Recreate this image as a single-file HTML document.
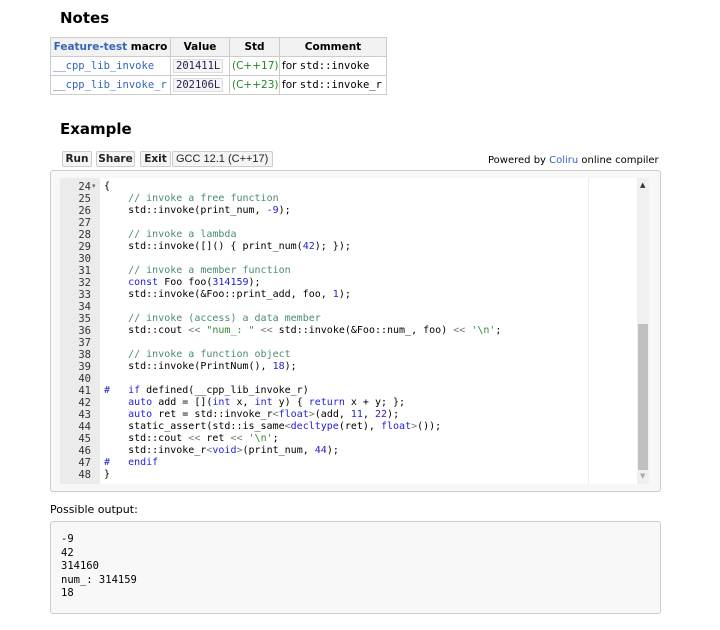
<!DOCTYPE html>
<html><head><meta charset="utf-8"><style>
body{margin:0;width:720px;height:630px;background:#fff;font-family:"DejaVu Sans","Liberation Sans",sans-serif;color:#000;position:relative;overflow:hidden}
.a{position:absolute}
h2{position:absolute;margin:0;font-size:15px;font-weight:bold;left:60px}
table{position:absolute;left:50px;top:37px;border-collapse:collapse;font-size:10.5px;table-layout:fixed;width:336px}
td,th{border:1px solid #ccc;padding:0 2px;height:18px;white-space:nowrap;overflow:hidden}
th{background:#f2f2f2;font-weight:bold}
tr td{background:#fff}
.m{font-family:"DejaVu Sans Mono",monospace;font-size:10.5px}
.l{color:#3366bb}
.v{background:#f5f5f5;border:1px solid #ddd;padding:0 2px;color:#225}
.g{color:#228822}
.btn{position:absolute;top:151px;height:14px;border:1px solid #ccc;background:#f4f4f4;font-size:10.5px;font-weight:bold;line-height:14px;text-align:center;border-radius:2px;color:#222;white-space:nowrap;overflow:hidden}
pre{margin:0;font-family:"DejaVu Sans Mono",monospace;font-size:10px;line-height:12px}
.c{color:#4a8a7a}.k{color:#2222dd}.n{color:#2222cc}.s{color:#338833}.o{color:#777}
</style></head><body>
<h2 style="top:9px">Notes</h2>
<table>
<colgroup><col style="width:120px"><col style="width:59px"><col style="width:50px"><col style="width:107px"></colgroup>
<tr><th><span class="l">Feature-test</span> macro</th><th>Value</th><th>Std</th><th>Comment</th></tr>
<tr><td class="m l">__cpp_lib_invoke</td><td><span class="v m">201411L</span></td><td class="g">(C++17)</td><td>for <span class="m">std::invoke</span></td></tr>
<tr><td class="m l">__cpp_lib_invoke_r</td><td><span class="v m">202106L</span></td><td class="g">(C++23)</td><td>for <span class="m">std::invoke_r</span></td></tr>
</table>
<h2 style="top:120px">Example</h2>
<div class="btn" style="left:62px;width:28px">Run</div>
<div class="btn" style="left:96px;width:37px">Share</div>
<div class="btn" style="left:140px;width:29px">Exit</div>
<div class="btn" style="left:172px;width:101px;font-weight:normal;font-family:'Liberation Sans',sans-serif;text-align:left;padding-left:3px;box-sizing:border-box;height:16px;font-size:11px">GCC 12.1 (C++17)&#160;&#x2304;</div>
<div class="a" style="left:488px;top:155px;font-size:10px;white-space:nowrap">Powered by <span class="l">Coliru</span> online compiler</div>
<div class="a" style="left:50px;top:170px;width:609px;height:320px;border:1px solid #ccc;border-radius:3px;background:#f7f7f7"></div>
<div class="a" style="left:60px;top:178px;width:40px;height:306px;background:#ebebeb"></div>
<div class="a" style="left:100px;top:178px;width:488px;height:306px;background:#fff"></div>
<div class="a" style="left:588px;top:178px;width:49px;height:306px;background:#fff;border-left:1px solid #eee"></div>
<div class="a" style="left:637px;top:178px;width:12px;height:306px;background:#f0f0f0"></div>
<div class="a" style="left:638px;top:324px;width:10px;height:146px;background:#c0c0c0"></div>
<div class="a" style="left:640px;top:181px;font-size:7px;color:#333">▲</div>
<div class="a" style="left:640px;top:472px;font-size:7px;color:#aaa">▼</div>
<pre class="a" style="left:60px;top:181px;width:31px;text-align:right;color:#333;font-size:10.5px">24
25
26
27
28
29
30
31
32
33
34
35
36
37
38
39
40
41
42
43
44
45
46
47
48</pre>
<div class="a" style="left:92px;top:182px;font-size:7px;color:#666">▾</div>
<pre class="a" style="left:104px;top:181px">{
    <span class="c">// invoke a free function</span>
    std::invoke(print_num, <span class="n">-9</span>);

    <span class="c">// invoke a lambda</span>
    std::invoke([]() { print_num(<span class="n">42</span>); });

    <span class="c">// invoke a member function</span>
    <span class="k">const</span> Foo foo(<span class="n">314159</span>);
    std::invoke(&amp;Foo::print_add, foo, <span class="n">1</span>);

    <span class="c">// invoke (access) a data member</span>
    std::cout <span class="o">&lt;&lt;</span> <span class="s">"num_: "</span> <span class="o">&lt;&lt;</span> std::invoke(&amp;Foo::num_, foo) <span class="o">&lt;&lt;</span> <span class="s">'\n'</span>;

    <span class="c">// invoke a function object</span>
    std::invoke(PrintNum(), <span class="n">18</span>);

<span class="k">#</span>   <span class="k">if</span> defined(__cpp_lib_invoke_r)
    <span class="k">auto</span> add = [](<span class="k">int</span> x, <span class="k">int</span> y) { <span class="k">return</span> x + y; };
    <span class="k">auto</span> ret = std::invoke_r<span class="o">&lt;</span><span class="k">float</span><span class="o">&gt;</span>(add, <span class="n">11</span>, <span class="n">22</span>);
    static_assert(std::is_same<span class="o">&lt;</span><span class="k">decltype</span>(ret), <span class="k">float</span><span class="o">&gt;</span>());
    std::cout <span class="o">&lt;&lt;</span> ret <span class="o">&lt;&lt;</span> <span class="s">'\n'</span>;
    std::invoke_r<span class="o">&lt;</span><span class="k">void</span><span class="o">&gt;</span>(print_num, <span class="n">44</span>);
<span class="k">#</span>   <span class="k">endif</span>
}</pre>
<div class="a" style="left:50px;top:503px;font-size:11px">Possible output:</div>
<div class="a" style="left:50px;top:521px;width:609px;height:91px;border:1px solid #ccc;border-radius:3px;background:#f8f8f8"></div>
<pre class="a" style="left:61px;top:533px;font-size:10.5px;line-height:13.5px">-9
42
314160
num_: 314159
18</pre>
</body></html>
